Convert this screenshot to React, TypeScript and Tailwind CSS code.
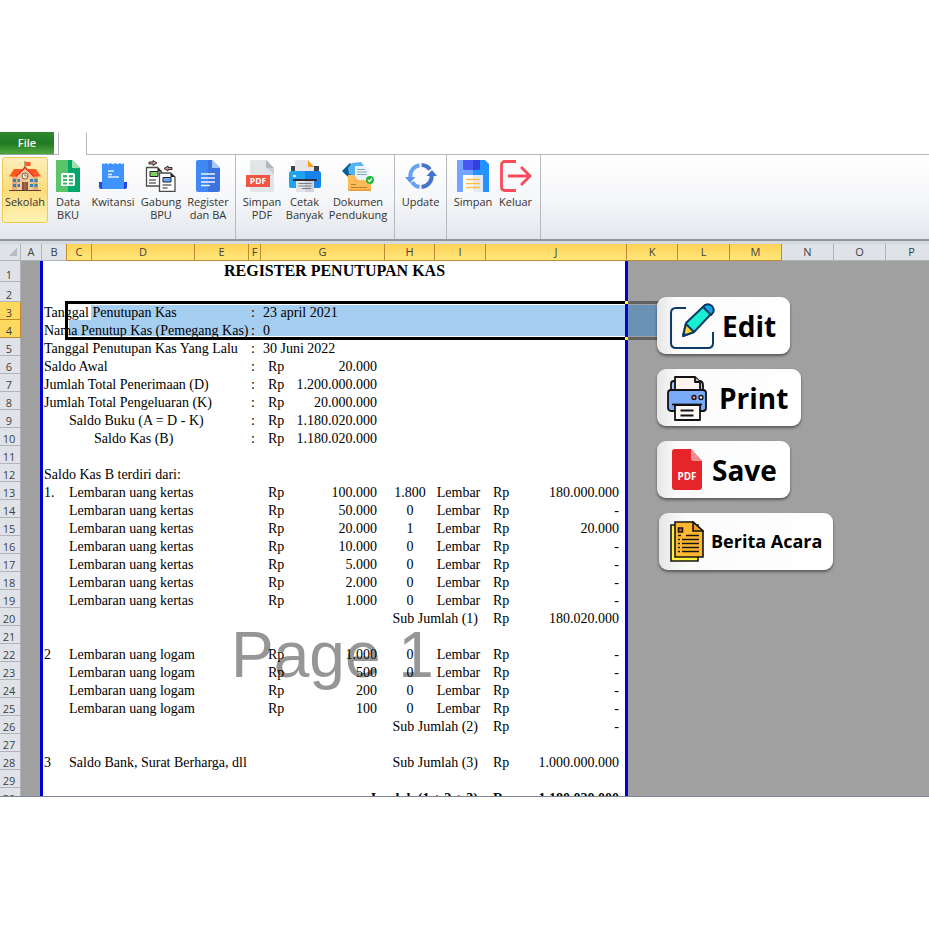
import type { ReactNode } from 'react';
import clsx from 'clsx';

type Align = 'left' | 'center' | 'right';
type Cell = { text?: string; rp?: string; align?: Align; className?: string };
type Row = { bold?: boolean; cells: Record<string, Cell> };

const columns = [
  { id: 'A', width: 'w-[21px]' },
  { id: 'B', width: 'w-[25px]' },
  { id: 'C', width: 'w-[25px]' },
  { id: 'D', width: 'w-[103px]' },
  { id: 'E', width: 'w-[54px]' },
  { id: 'F', width: 'w-[12px]' },
  { id: 'G', width: 'w-[124px]' },
  { id: 'H', width: 'w-[50px]' },
  { id: 'I', width: 'w-[51px]' },
  { id: 'J', width: 'w-[141px]' },
  { id: 'K', width: 'w-[51px]' },
  { id: 'L', width: 'w-[52px]' },
  { id: 'M', width: 'w-[52px]' },
  { id: 'N', width: 'w-[52px]' },
  { id: 'O', width: 'w-[52px]' },
  { id: 'P', width: '' },
];

const selectedColumns = 'CDEFGHIJKLM';
const selectedRows = [3, 4];

function infoRow(label: string, value: string): Row {
  return { cells: { B: { text: label }, F: { text: ':' }, G: { text: value } } };
}

function amountRow(label: string, value: string, column = 'B'): Row {
  return { cells: { [column]: { text: label }, F: { text: ':' }, G: { rp: 'Rp', text: value } } };
}

function cashRow(kind: string, unit: string, count: string, total: string, no = ''): Row {
  return {
    cells: {
      B: { text: no },
      C: { text: `Lembaran uang ${kind}` },
      G: { rp: 'Rp', text: unit },
      H: { text: count, align: 'center' },
      I: { text: 'Lembar', align: 'center', className: 'pr-1' },
      J: { rp: 'Rp', text: total },
    },
  };
}

function totalRow(label: string, total: string, extra: Record<string, Cell> = {}, bold = false): Row {
  return {
    bold,
    cells: { ...extra, I: { text: label, align: 'right', className: 'pr-2' }, J: { rp: 'Rp', text: total } },
  };
}

const blank: Row = { cells: {} };

// sheet rows 3 to 30
const rows: Row[] = [
  infoRow('Tanggal Penutupan Kas', '23 april 2021'),
  infoRow('Nama Penutup Kas (Pemegang Kas)', '0'),
  infoRow('Tanggal Penutupan Kas Yang Lalu', '30 Juni 2022'),
  amountRow('Saldo Awal', '20.000'),
  amountRow('Jumlah Total Penerimaan (D)', '1.200.000.000'),
  amountRow('Jumlah Total Pengeluaran (K)', '20.000.000'),
  amountRow('Saldo Buku (A = D - K)', '1.180.020.000', 'C'),
  amountRow('Saldo Kas (B)', '1.180.020.000', 'D'),
  blank,
  { cells: { B: { text: 'Saldo Kas B terdiri dari:' } } },
  cashRow('kertas', '100.000', '1.800', '180.000.000', '1.'),
  cashRow('kertas', '50.000', '0', '-'),
  cashRow('kertas', '20.000', '1', '20.000'),
  cashRow('kertas', '10.000', '0', '-'),
  cashRow('kertas', '5.000', '0', '-'),
  cashRow('kertas', '2.000', '0', '-'),
  cashRow('kertas', '1.000', '0', '-'),
  totalRow('Sub Jumlah (1)', '180.020.000'),
  blank,
  cashRow('logam', '1.000', '0', '-', '2'),
  cashRow('logam', '500', '0', '-'),
  cashRow('logam', '200', '0', '-'),
  cashRow('logam', '100', '0', '-'),
  totalRow('Sub Jumlah (2)', '-'),
  blank,
  totalRow('Sub Jumlah (3)', '1.000.000.000', {
    B: { text: '3' },
    C: { text: 'Saldo Bank, Surat Berharga, dll' },
  }),
  blank,
  totalRow('Jumlah (1 + 2 + 3)', '1.180.020.000', {}, true),
];

/* ---------- ribbon icons ---------- */

function Icon({ children }: { children: ReactNode }) {
  return (
    <svg viewBox="0 0 32 32" className="size-8 shrink-0" aria-hidden>
      {children}
    </svg>
  );
}

function SchoolIcon() {
  return (
    <Icon>
      <rect x="3" y="14" width="26" height="16" fill="#e8a983" />
      <path d="M5 9h22l5 7.500H0z" fill="#ff5a1f" />
      <path d="M16 7 8 15v15h16V15z" fill="#f4c795" />
      <path d="m7 16.500 9-9 9 9" fill="none" stroke="#e8352c" strokeWidth="1.600" />
      <path d="M16 1v7" stroke="#7a5a4a" />
      <path d="M16.500 2h5v4h-5z" fill="#ff5a1f" />
      <circle cx="16" cy="16" r="3" fill="#f6eecb" stroke="#7b5544" />
      <path d="M16 14.500V16h1.500" fill="none" stroke="#444" strokeWidth=".8" />
      <rect x="13" y="22" width="6" height="8" fill="#8a5340" />
      <path d="M16 22v8" stroke="#b9795c" />
      <g fill="#2f86b0">
        <path d="M4 19h3v3H4zM8.500 19h2.500v3H8.500zM4 24h3v3H4zM8.500 24h2.500v3H8.500zM21 19h3v3h-3zM25.500 19h3v3h-3zM21 24h3v3h-3zM25.500 24h3v3h-3z" />
      </g>
      <path d="M0 30.500h32" stroke="#5b3f38" />
    </Icon>
  );
}

function SheetIcon() {
  return (
    <Icon>
      <path d="M4 0h12v32H4z" fill="#5ac46b" />
      <path d="M16 0h4l8 8v24H16z" fill="#00a66c" />
      <path d="m20 0 8 8h-8z" fill="#9fe0a9" />
      <rect x="9" y="13" width="14" height="13" rx="1.500" fill="#fff" />
      <path d="M11 15h4v2.500h-4zM17 15h4v2.500h-4zM11 19h4v2h-4zM17 19h4v2h-4zM11 22.500h4v2h-4zM17 22.500h4v2h-4z" fill="#3fb56b" />
    </Icon>
  );
}

function ReceiptIcon() {
  return (
    <Icon>
      <path d="M2 22h28v5q0 2-2 2H4q-2 0-2-2z" fill="#2645e0" />
      <path d="M5 3l2 1.200L9 3l2.300 1.200L13.500 3 16 4.200 18.500 3l2.200 1.200L23 3l2 1.200L27 3v26H5z" fill="#3f93ff" />
      <path d="M11 11h6M11 17h11M11 14.500h4" stroke="#e4efff" strokeWidth="1.600" />
    </Icon>
  );
}

function MergeIcon() {
  return (
    <Icon>
      <path d="M1.500 7.500h11l4 4V26h-15z" fill="#fff" stroke="#4b4b4b" strokeWidth="1.300" />
      <path d="M12.500 7.500v4h4z" fill="#222" />
      <path d="M5 11.500h8v5H5z" fill="#7fd06a" stroke="#222" />
      <path d="M4 20h7M4 23h7" stroke="#222" strokeWidth="1.200" />
      <path d="M14.500 13h11l4.500 4v14.500H14.500z" fill="#fff" stroke="#4b4b4b" strokeWidth="1.300" />
      <path d="M25.500 13v4H30z" fill="#222" />
      <path d="M18 17.500h8V22h-8z" fill="#6fa5ff" stroke="#222" />
      <path d="M17.500 25h9M17.500 28h5" stroke="#222" strokeWidth="1.200" />
      <path d="M4 2h4V.500L12 3 8 5.500V4H4zM27 7.500h-4V6l-4 2.500 4 2.500V9.500h4z" fill="#d99090" stroke="#222" strokeWidth=".9" />
    </Icon>
  );
}

function RegisterIcon() {
  return (
    <Icon>
      <path d="M6 0h10v32H6q-2 0-2-2V2q0-2 2-2z" fill="#4088f5" />
      <path d="M16 0h4l8 8v22q0 2-2 2H16z" fill="#3c74de" />
      <path d="m20 0 8 8h-8z" fill="#a6c8ff" />
      <path d="M9 14h14M9 18h14M9 22h14M9 25.500h9" stroke="#eef4ff" strokeWidth="1.700" />
    </Icon>
  );
}

function PdfIcon() {
  return (
    <Icon>
      <path d="M6 0h15l7 8v22q0 2-2 2H6q-2 0-2-2V2q0-2 2-2z" fill="#e2e5e7" />
      <path d="m20 0 8 8h-8z" fill="#b0b7bd" />
      <path d="m21 8 7 7V8z" fill="#cad1d8" />
      <path d="M0 15h24v12H0z" fill="#f15642" />
      <text x="12" y="24.200" fontSize="8.500" textAnchor="middle" fill="#fff" className="font-['Open_Sans',sans-serif] font-bold">
        PDF
      </text>
    </Icon>
  );
}

function PrinterIcon() {
  return (
    <Icon>
      <path d="M2 6h28v6H2z" fill="#3d434d" />
      <path d="M6 0h13l6 7v5H6z" fill="#e6e6ea" />
      <path d="m19 0 6 7h-6z" fill="#ff9d1f" />
      <path d="M2.500 11H16v17H2q-2 0-2-2V13.500Q0 11 2.500 11z" fill="#1fa4f2" />
      <path d="M16 11h13.500q2.500 0 2.500 2.500V26q0 2-2 2H16z" fill="#1583e9" />
      <path d="M4 16h3" stroke="#fff" strokeWidth="1.600" />
      <path d="M4 20h24" stroke="#2e3238" strokeWidth="2" />
      <path d="M7 21h18v11H7z" fill="#e4e5ea" />
      <path d="M16 21h9v11h-9z" fill="#d2d3da" />
      <path d="M9.500 23.500h13M9.500 26h13M13 28.500h9" stroke="#777a83" />
    </Icon>
  );
}

function FolderIcon() {
  return (
    <Icon>
      <path d="M0 11 8 3l8 8-8 8z" fill="#085f92" />
      <path d="M6 8 10 3l9-1 3 4-8 10-7-2z" fill="#55b2f5" />
      <path d="M13 6h10l4 3v11H13z" fill="#eaf3fb" />
      <path d="M15 9.500h8M15 12h10M15 14.500h10" stroke="#7f9bb5" strokeWidth=".9" />
      <path d="M6 15h6l4 5h13v11H7q-1 0-1-1z" fill="#ffbb55" />
      <path d="M6 29.500h23V31H7z" fill="#e99b34" />
      <path d="M9 24.500h5M9 27.500h16" stroke="#b8772a" strokeWidth=".9" />
      <circle cx="28" cy="20" r="4" fill="#1fb83a" />
      <path d="m26 20 1.500 1.500L30 18.500" fill="none" stroke="#fff" strokeWidth="1.200" />
    </Icon>
  );
}

function UpdateIcon() {
  return (
    <Icon>
      <path d="M5.500 18A11 11 0 0 1 14.500 5.200" fill="none" stroke="#6aa2f2" strokeWidth="4" />
      <path d="M16.500 5A11 11 0 0 1 25 9.500" fill="none" stroke="#4673cc" strokeWidth="4" />
      <path d="M26.500 14A11 11 0 0 1 16.500 27" fill="none" stroke="#4673cc" strokeWidth="4" />
      <path d="M14.500 27A11 11 0 0 1 7 22" fill="none" stroke="#6aa2f2" strokeWidth="4" />
      <path d="M0 17h10.500L5 23z" fill="#5c96ec" />
      <path d="M21.500 16H32l-5-6z" fill="#4673cc" />
    </Icon>
  );
}

function FloppyIcon() {
  return (
    <Icon>
      <path d="M0 0h16v32H0z" fill="#74a6ff" />
      <path d="M16 0h12l4 4v28H16z" fill="#2492ff" />
      <path d="M6 0h10v10H7.500Q6 10 6 8.500z" fill="#4b57f5" />
      <path d="M16 0h7v8.500q0 1.500-1.500 1.500H16z" fill="#3340dd" />
      <path d="M6 15h20v17H6z" fill="#fff" />
      <path d="M16 15h10v17H16z" fill="#e5eaf2" />
      <path d="M9 19.500h14M9 23.500h14M9 27.500h14" stroke="#ffc03d" strokeWidth="1.700" />
    </Icon>
  );
}

function ExitIcon() {
  return (
    <Icon>
      <path d="M16 1.500H5Q1.500 1.500 1.500 5v22q0 3.500 3.500 3.500h11" fill="none" stroke="#fb4a59" strokeWidth="2.800" />
      <path d="M8 16h22M21 7l9 9-9 9" fill="none" stroke="#fb4a59" strokeWidth="2.800" />
    </Icon>
  );
}

/* ---------- macro button icons ---------- */

function EditArt() {
  return (
    <svg viewBox="0 0 46 48" className="h-12 w-[46px] shrink-0" aria-hidden>
      <path d="M17 6H7Q2 6 2 11v30q0 5 5 5h32q5 0 5-5V30" fill="none" stroke="#0e3b66" strokeWidth="2" />
      <path d="m14 34 3-13L36 3l7 8-18 19z" fill="#17f0d2" stroke="#0e3b66" strokeWidth="2" strokeLinejoin="round" />
      <path d="m14 34 3-12 8 8z" fill="#ffd92e" stroke="#0e3b66" strokeWidth="2" strokeLinejoin="round" />
      <path d="m34 5q4-5 9-1 4 5-1 9z" fill="#17a3ee" stroke="#0e3b66" strokeWidth="2" strokeLinejoin="round" />
      <path d="m15.500 30.500-1.500 4 4-1.200z" fill="#0e3b66" />
    </svg>
  );
}

function PrintArt() {
  return (
    <svg viewBox="0 0 40 46" className="h-[46px] w-10 shrink-0" aria-hidden>
      <g stroke="#111" strokeWidth="1.800" strokeLinejoin="round">
        <path d="M4 16V9q0-3 3-3h25q4 0 4 4v6" fill="#aacbff" />
        <path d="M8 17V2h20l5 5v10z" fill="#fbf3ee" />
        <path d="M28 2v5h5" fill="#bdbdc4" />
        <rect x="1" y="15" width="38" height="21" rx="3" fill="#7aabfb" />
        <path d="M5 29.500h30" />
        <path d="M8 30h25v15H8z" fill="#fff9f6" />
        <path d="M13.500 35.500h13M13.500 40.500h13" />
      </g>
      <circle cx="27" cy="22.500" r="2" fill="#f49191" stroke="#111" strokeWidth="1.300" />
      <circle cx="34" cy="22.500" r="2" fill="#fff" stroke="#111" strokeWidth="1.300" />
    </svg>
  );
}

function SaveArt() {
  return (
    <svg viewBox="0 0 30 41" className="h-[41px] w-[30px] shrink-0" aria-hidden>
      <path d="M3 0h16l11 12v26q0 3-3 3H3q-3 0-3-3V3q0-3 3-3z" fill="#e5252a" />
      <path d="m19 0 11 12H21q-2 0-2-2z" fill="#f38c8e" />
      <text x="15" y="31" fontSize="10" textAnchor="middle" fill="#fff" className="font-['Open_Sans',sans-serif] font-bold">
        PDF
      </text>
    </svg>
  );
}

function NewsArt() {
  return (
    <svg viewBox="0 0 34 41" className="h-[41px] w-[34px] shrink-0" aria-hidden>
      <g stroke="#161616" strokeWidth="1.600">
        <path d="M1 4h27v36H1z" fill="#ffee3c" />
        <path d="M5 1h18l10 9v26H5z" fill="#ffb731" />
        <path d="M23 1v9h10z" fill="#f09c25" />
        <path d="M8.500 7h4v4h-4z" fill="#e8505c" />
      </g>
      <path
        d="M16 14.500h13M8 14.500h3M12 18.500h17M8 18.500h2M12 22.500h17M8 22.500h2M12 26.500h17M8 26.500h2M12 30.500h17M8 30.500h2"
        stroke="#161616"
        strokeWidth="1.500"
      />
    </svg>
  );
}

/* ---------- ribbon ---------- */

type Command = { label: string[]; icon: ReactNode; width: string; active?: boolean };

const groups: { id: string; padding: string; commands: Command[] }[] = [
  {
    id: 'data',
    padding: 'pl-[2px] pr-[3px]',
    commands: [
      { label: ['Sekolah'], icon: <SchoolIcon />, width: 'w-[46px]', active: true },
      { label: ['Data', 'BKU'], icon: <SheetIcon />, width: 'w-[40px]' },
      { label: ['Kwitansi'], icon: <ReceiptIcon />, width: 'w-[50px]' },
      { label: ['Gabung', 'BPU'], icon: <MergeIcon />, width: 'w-[46px]' },
      { label: ['Register', 'dan BA'], icon: <RegisterIcon />, width: 'w-[48px]' },
    ],
  },
  {
    id: 'cetak',
    padding: 'pl-[4px] pr-[3px]',
    commands: [
      { label: ['Simpan', 'PDF'], icon: <PdfIcon />, width: 'w-[44px]' },
      { label: ['Cetak', 'Banyak'], icon: <PrinterIcon />, width: 'w-[41px]' },
      { label: ['Dokumen', 'Pendukung'], icon: <FolderIcon />, width: 'w-[66px]' },
    ],
  },
  {
    id: 'update',
    padding: 'px-0',
    commands: [{ label: ['Update'], icon: <UpdateIcon />, width: 'w-[51px]' }],
  },
  {
    id: 'keluar',
    padding: 'pl-[3px] pr-[5px]',
    commands: [
      { label: ['Simpan'], icon: <FloppyIcon />, width: 'w-[46px]' },
      { label: ['Keluar'], icon: <ExitIcon />, width: 'w-[39px]' },
    ],
  },
];

function RibbonButton({ label, icon, width, active }: Command) {
  return (
    <button
      type="button"
      className={clsx(
        'flex h-[66px] flex-col items-center rounded-[3px] border pt-[2px] text-[11px] leading-[13px] whitespace-nowrap text-[#333]',
        width,
        active
          ? 'border-[#f0c84a] bg-linear-to-b from-[#fdeebb] via-[#fbdc7c] to-[#fff3b4]'
          : 'border-transparent hover:border-[#f0c84a]',
      )}
    >
      {icon}
      <span className="mt-[3px] flex flex-col items-center">
        {label.map((line) => (
          <span key={line}>{line}</span>
        ))}
      </span>
    </button>
  );
}

function Ribbon() {
  return (
    <header>
      <nav className="flex h-[23px] items-stretch">
        <button
          type="button"
          className="w-[54px] border-b border-[#8fa0a0] bg-linear-to-b from-[#2c8a2c] via-[#1f7a24] to-[#52a83e] text-[11px] font-semibold text-white"
        >
          File
        </button>
        <span className="w-1 border-b border-[#b4b8bd]" />
        <button type="button" aria-label="Menu" className="w-[29px] rounded-t-[2px] border-x border-[#b4b8bd] bg-white" />
        <span className="grow border-b border-[#b4b8bd]" />
      </nav>
      <div className="flex h-[86px] border-b-2 border-[#8f969f] bg-linear-to-b from-white via-[#f6f7f9] to-[#e3e7ed]">
        {groups.map((group) => (
          <div key={group.id} className={clsx('flex border-r border-[#b5bac1] pt-[2px]', group.padding)}>
            {group.commands.map((command) => (
              <RibbonButton key={command.label.join(' ')} {...command} />
            ))}
          </div>
        ))}
      </div>
    </header>
  );
}

/* ---------- sheet ---------- */

function RowHeader({ n }: { n: number }) {
  return (
    <th
      scope="row"
      className={clsx(
        "border-r border-b p-0 text-center align-bottom font-['Open_Sans',sans-serif] text-[11px] font-normal text-[#3f3f3f]",
        selectedRows.includes(n) ? 'border-[#c08a35] bg-[#ffd95e]' : 'border-[#b0b4ba] bg-[#dfe3e8]',
      )}
    >
      <span className="block pr-[2px] leading-[13px]">{n}</span>
    </th>
  );
}

function CellContent({ cell }: { cell: Cell }) {
  if (cell.rp) {
    return (
      <div className="flex justify-between pr-2 pl-[7px]">
        <span>{cell.rp}</span>
        <span>{cell.text}</span>
      </div>
    );
  }
  return (
    <div
      className={clsx(
        'flex',
        cell.align === 'center' && 'justify-center',
        cell.align === 'right' && 'justify-end',
        !cell.align && 'pl-[2px]',
        cell.className,
      )}
    >
      {cell.text}
    </div>
  );
}

// Print area, selection and watermark sit behind the transparent cells.
function SheetBackdrop() {
  return (
    <div className="pointer-events-none absolute inset-0 -z-10">
      <div className="absolute inset-y-0 left-[40px] w-[588px] bg-white" />
      <span className="absolute top-[375px] left-[231px] font-['Liberation_Sans',Arial,sans-serif] text-[64px] leading-[72px] whitespace-nowrap text-[#969696]">
        Page 1
      </span>
      <div className="absolute top-[57px] left-[65px] h-[39px] w-[563px] border-y-[3px] border-l-[3px] border-black bg-white py-px pl-px">
        <div className="h-full bg-[#a5cef0]">
          <div className="h-[15px] w-[22px] bg-white" />
        </div>
      </div>
      <div className="absolute top-[57px] left-[628px] h-[39px] w-[36px] border-y-[3px] border-[#606060] py-px">
        <div className="h-full bg-[#6991b4]" />
      </div>
      <div className="absolute top-[16px] bottom-0 left-[40px] w-[588px] border-x-[3px] border-t border-[#0000d0]" />
      <div className="absolute top-[57px] left-[625px] size-[3px] bg-[#ffff2f]" />
      <div className="absolute top-[93px] left-[625px] size-[3px] bg-[#ffff2f]" />
    </div>
  );
}

const macroButtons = [
  { label: 'Edit', icon: <EditArt />, className: 'w-[133px] gap-[7px] pl-3 text-[28px]' },
  { label: 'Print', icon: <PrintArt />, className: 'w-[144px] gap-3 pl-[10px] text-[28px]' },
  { label: 'Save', icon: <SaveArt />, className: 'w-[133px] gap-[10px] pl-[15px] text-[28px]' },
  { label: 'Berita Acara', icon: <NewsArt />, className: 'ml-[2px] w-[174px] gap-[7px] pl-[11px] text-[18px]' },
];

function MacroButtons() {
  return (
    <div className="absolute top-[53px] left-[657px] flex flex-col items-start gap-[15px]">
      {macroButtons.map(({ label, icon, className }) => (
        <button
          key={label}
          type="button"
          className={clsx(
            'flex h-[57px] items-center rounded-[9px] bg-linear-to-r from-[#e6e6e6] via-[#fbfbfb] via-15% to-white font-bold whitespace-nowrap text-black shadow-[0_2px_3px_rgba(0,0,0,0.45)]',
            className,
          )}
        >
          {icon}
          {label}
        </button>
      ))}
    </div>
  );
}

function Sheet() {
  return (
    <main className="relative isolate h-[553px] overflow-hidden border-b border-[#7d8894] bg-[#a0a0a0]">
      <SheetBackdrop />
      <table className="w-full min-w-[938px] table-fixed border-separate border-spacing-0">
        <colgroup>
          <col className="w-[21px]" />
          {columns.map((c) => (
            <col key={c.id} className={c.width} />
          ))}
        </colgroup>
        <thead>
          <tr className="h-[17px] text-[11px] leading-[16px]">
            <th className="border-r border-b border-[#b0b4ba] bg-[#dfe3e8] p-0" aria-label="Pilih semua">
              <svg viewBox="0 0 8 8" className="mr-[3px] ml-auto size-[8px]" aria-hidden>
                <path d="M8 0v8H0z" fill="#b5bac0" />
              </svg>
            </th>
            {columns.map(({ id }) => (
              <th
                key={id}
                scope="col"
                className={clsx(
                  'border-r border-b p-0 font-normal text-[#3f3f3f]',
                  selectedColumns.includes(id)
                    ? 'border-[#c08a35] bg-linear-to-b from-[#ffd257] to-[#ffe77a]'
                    : 'border-[#b0b4ba] bg-[#dfe3e8]',
                  id === 'B' && 'border-r-[#c08a35]',
                )}
              >
                {id}
              </th>
            ))}
          </tr>
        </thead>
        <tbody className="font-['Liberation_Serif','Times_New_Roman',serif] text-[14px] leading-[14px] whitespace-nowrap text-black">
          <tr className="h-[21px]">
            <RowHeader n={1} />
            <td className="p-0" />
            <td colSpan={9} className="p-0 text-center align-top text-[16px] leading-5 font-bold">
              REGISTER PENUTUPAN KAS
            </td>
            <td colSpan={6} className="p-0" />
          </tr>
          <tr className="h-[20px]">
            <RowHeader n={2} />
            <td colSpan={16} className="p-0" />
          </tr>
          {rows.map((row, i) => (
            <tr key={i} className={clsx('h-[18px]', row.bold && 'font-bold')}>
              <RowHeader n={i + 3} />
              {columns.map(({ id }) => (
                <td key={id} className="p-0 align-bottom">
                  {row.cells[id] ? <CellContent cell={row.cells[id]} /> : null}
                </td>
              ))}
            </tr>
          ))}
        </tbody>
      </table>
      <MacroButtons />
    </main>
  );
}

export default function App() {
  return (
    <div className="min-h-screen bg-white py-[132px] font-['Open_Sans','Noto_Sans',sans-serif]">
      <Ribbon />
      <div className="bg-[#d5dae0] pt-[3px]">
        <Sheet />
      </div>
    </div>
  );
}
